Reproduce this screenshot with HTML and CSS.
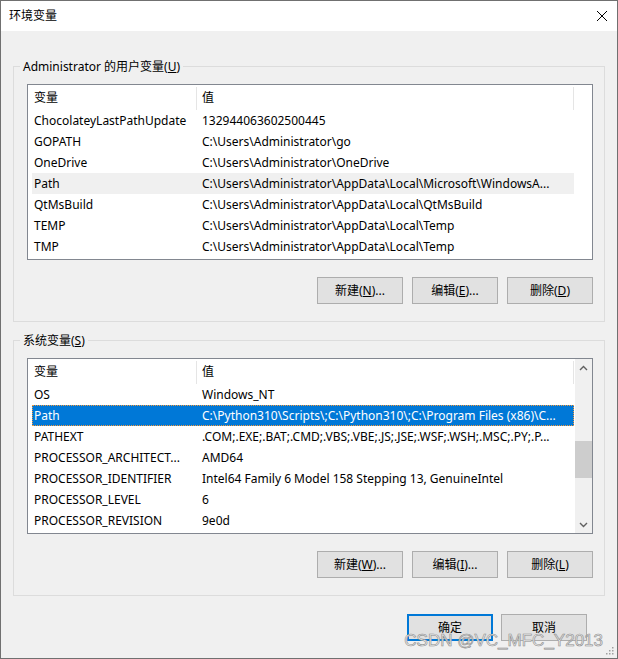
FILE: index.html
```html
<!DOCTYPE html>
<html lang="zh-CN">
<head>
    <meta charset="UTF-8">
    <title>环境变量</title>
    <link rel="stylesheet" href="styles.css">
</head>
<body>
    <div class="window">
        <div class="titlebar">
            <span class="title">环境变量</span>
            <span class="close">
                <svg width="12" height="12" viewBox="0 0 12 12"><path d="M1 1 L11 11 M11 1 L1 11" stroke="#000" stroke-width="1" fill="none"/></svg>
            </span>
        </div>

        <div class="client">
            <fieldset class="group">
                <legend>Administrator 的用户变量(<u>U</u>)</legend>
                <div class="group-body">
                    <div class="listview">
                        <div class="lv-main">
                            <div class="lv-header">
                                <div class="hd hd-name">变量</div>
                                <div class="hd hd-value">值</div>
                            </div>
                            <div class="lv-row"><span class="c-name">ChocolateyLastPathUpdate</span><span class="c-value">132944063602500445</span></div>
                            <div class="lv-row"><span class="c-name">GOPATH</span><span class="c-value">C:\Users\Administrator\go</span></div>
                            <div class="lv-row"><span class="c-name">OneDrive</span><span class="c-value">C:\Users\Administrator\OneDrive</span></div>
                            <div class="lv-row inactive"><span class="c-name">Path</span><span class="c-value">C:\Users\Administrator\AppData\Local\Microsoft\WindowsA...</span></div>
                            <div class="lv-row"><span class="c-name">QtMsBuild</span><span class="c-value">C:\Users\Administrator\AppData\Local\QtMsBuild</span></div>
                            <div class="lv-row"><span class="c-name">TEMP</span><span class="c-value">C:\Users\Administrator\AppData\Local\Temp</span></div>
                            <div class="lv-row"><span class="c-name">TMP</span><span class="c-value">C:\Users\Administrator\AppData\Local\Temp</span></div>
                        </div>
                    </div>
                    <div class="btn-row">
                        <button class="btn">新建(<u>N</u>)...</button>
                        <button class="btn">编辑(<u>E</u>)...</button>
                        <button class="btn">删除(<u>D</u>)</button>
                    </div>
                </div>
            </fieldset>

            <fieldset class="group group-sys">
                <legend>系统变量(<u>S</u>)</legend>
                <div class="group-body">
                    <div class="listview">
                        <div class="lv-main">
                            <div class="lv-header">
                                <div class="hd hd-name">变量</div>
                                <div class="hd hd-value">值</div>
                            </div>
                            <div class="lv-row"><span class="c-name">OS</span><span class="c-value">Windows_NT</span></div>
                            <div class="lv-row selected"><span class="c-name">Path</span><span class="c-value">C:\Python310\Scripts\;C:\Python310\;C:\Program Files (x86)\C...</span></div>
                            <div class="lv-row"><span class="c-name">PATHEXT</span><span class="c-value">.COM;.EXE;.BAT;.CMD;.VBS;.VBE;.JS;.JSE;.WSF;.WSH;.MSC;.PY;.P...</span></div>
                            <div class="lv-row"><span class="c-name">PROCESSOR_ARCHITECT...</span><span class="c-value">AMD64</span></div>
                            <div class="lv-row"><span class="c-name">PROCESSOR_IDENTIFIER</span><span class="c-value">Intel64 Family 6 Model 158 Stepping 13, GenuineIntel</span></div>
                            <div class="lv-row"><span class="c-name">PROCESSOR_LEVEL</span><span class="c-value">6</span></div>
                            <div class="lv-row"><span class="c-name">PROCESSOR_REVISION</span><span class="c-value">9e0d</span></div>
                        </div>
                        <div class="scrollbar">
                            <div class="sb-btn">
                                <svg width="9" height="6" viewBox="0 0 9 6"><path d="M1 5 L4.5 1.5 L8 5" stroke="#606060" stroke-width="1.4" fill="none"/></svg>
                            </div>
                            <div class="sb-track"><div class="sb-thumb"></div></div>
                            <div class="sb-btn">
                                <svg width="9" height="6" viewBox="0 0 9 6"><path d="M1 1 L4.5 4.5 L8 1" stroke="#606060" stroke-width="1.4" fill="none"/></svg>
                            </div>
                        </div>
                    </div>
                    <div class="btn-row">
                        <button class="btn">新建(<u>W</u>)...</button>
                        <button class="btn">编辑(<u>I</u>)...</button>
                        <button class="btn">删除(<u>L</u>)</button>
                    </div>
                </div>
            </fieldset>

            <div class="dialog-buttons">
                <button class="btn btn-default">确定</button>
                <button class="btn">取消</button>
            </div>
        </div>

        <span class="watermark">CSDN @VC_MFC_Y2013</span>
        <svg class="grip" width="9" height="9" viewBox="0 0 9 9">
            <rect x="7" y="1" width="1.5" height="1.5" fill="#a0a0a0"/>
            <rect x="4" y="4" width="1.5" height="1.5" fill="#a0a0a0"/>
            <rect x="7" y="4" width="1.5" height="1.5" fill="#a0a0a0"/>
            <rect x="1" y="7" width="1.5" height="1.5" fill="#a0a0a0"/>
            <rect x="4" y="7" width="1.5" height="1.5" fill="#a0a0a0"/>
            <rect x="7" y="7" width="1.5" height="1.5" fill="#a0a0a0"/>
        </svg>
    </div>
</body>
</html>
```

FILE: styles.css
```css
* {
    margin: 0;
    padding: 0;
    box-sizing: border-box;
}

body {
    font-family: 'Noto Sans', 'Noto Sans CJK SC', sans-serif;
    font-size: 12px;
    color: #000;
    background: #f0f0f0;
}

.window {
    position: relative;
    width: 618px;
    height: 659px;
    border: 1px solid #707070;
    background: #f0f0f0;
    overflow: hidden;
}

/* 다른 창의 그림자 조각 */
.window::before {
    content: '';
    position: absolute;
    left: -1px;
    top: 605px;
    width: 1px;
    height: 17px;
    background: #2b2b2b;
}

.titlebar {
    height: 30px;
    background: #fff;
    display: flex;
    align-items: center;
    justify-content: space-between;
    padding: 0 9px 0 8px;
}

.title {
    font-size: 12px;
    line-height: 16px;
}

.close {
    display: flex;
    width: 12px;
    height: 12px;
    margin-top: -1px;
}

.client {
    padding: 27px 12px 0 12px;
}

.group {
    border: 1px solid #dcdcdc;
    padding: 0 0 0 6px;
}

.group-sys {
    margin-top: 10px;
}

.group legend {
    padding: 0 3px;
    line-height: 17px;
}

.group-body {
    padding: 9px 11px 17px 7px;
}

.listview {
    height: 176px;
    border: 1px solid #828790;
    background: #fff;
    display: flex;
}

.lv-main {
    width: 546px;
    padding-left: 4px;
}

.lv-header {
    display: flex;
    height: 25px;
    padding-top: 2px;
}

.hd {
    height: 23px;
    line-height: 21px;
    border-right: 1px solid #e5e5e5;
}

.hd-name {
    width: 165px;
    padding-left: 2px;
}

.hd-value {
    width: 377px;
    padding-left: 5px;
}

.lv-row {
    display: flex;
    width: 542px;
    height: 21px;
    line-height: 21px;
    white-space: nowrap;
}

.lv-row.inactive {
    background: #f0f0f0;
}

.lv-row.selected {
    background: #0078d7;
    color: #fff;
    outline: 1px dotted #f59a3c;
    outline-offset: -1px;
}

.c-name {
    width: 165px;
    padding-left: 2px;
    overflow: hidden;
}

.c-value {
    flex: 1;
    padding-left: 5px;
    overflow: hidden;
}

.scrollbar {
    width: 17px;
    margin-left: 1px;
    background: #f0f0f0;
    display: flex;
    flex-direction: column;
}

.sb-btn {
    height: 17px;
    display: flex;
    align-items: center;
    justify-content: center;
}

.sb-track {
    flex: 1;
}

.sb-thumb {
    height: 37px;
    margin-top: 65px;
    background: #cdcdcd;
}

.btn-row {
    display: flex;
    justify-content: flex-end;
    gap: 9px;
    margin-top: 17px;
}

.btn {
    width: 86px;
    height: 27px;
    border: 1px solid #adadad;
    background: #e1e1e1;
    font-family: 'Noto Sans', 'Noto Sans CJK SC', sans-serif;
    font-size: 12px;
    color: #000;
    line-height: 16px;
}

.btn-default {
    border-color: #0078d7;
    box-shadow: inset 0 0 0 1px #0078d7;
}

.dialog-buttons {
    display: flex;
    justify-content: flex-end;
    gap: 8px;
    margin-top: 18px;
    padding-right: 18px;
}

.watermark {
    position: absolute;
    right: 14px;
    bottom: 7px;
    font-family: 'Liberation Sans', sans-serif;
    font-size: 17px;
    line-height: 20px;
    color: #ececec;
    -webkit-text-stroke: 0.6px #8c8c8c;
    white-space: nowrap;
}

.grip {
    position: absolute;
    right: 3px;
    bottom: 3px;
}
```
